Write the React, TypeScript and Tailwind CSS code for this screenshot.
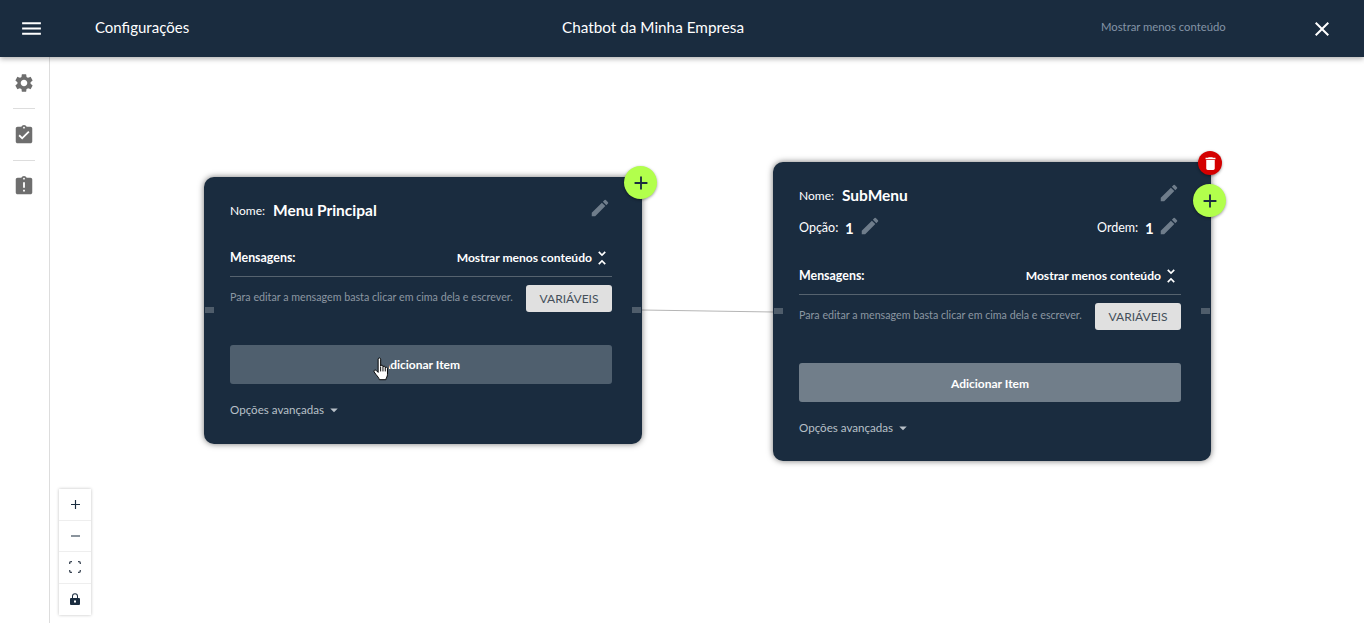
import { MdAdd, MdArrowDropDown, MdAssignmentLate, MdAssignmentTurnedIn, MdClose, MdDelete, MdEdit, MdMenu, MdSettings, MdUnfoldLess } from "react-icons/md";

const font = "font-['Lato','Noto_Sans',sans-serif]";

function HandCursor() {
  return (
    <svg className="absolute left-[143px] top-[12px]" width="18" height="25" viewBox="0 0 18 26">
      <path
        d="M5 2.2c0-1.6 2.6-1.6 2.6 0v7.3c0-1.3 2.4-1.3 2.4 0v1c0-1.2 2.4-1.2 2.4 0v1c0-1.1 2.3-1.1 2.3.2v6.3c0 2.6-1.4 3.4-1.7 5.6H6.3c-.5-2-2-3.4-3.4-5.2L.8 15.5c-.8-1.5 1-2.6 2.2-1.5L5 16V2.2z"
        fill="#fff"
        stroke="#000"
        strokeWidth="1"
      />
      <path d="M7.6 10v5M10 10.5v4.5M12.4 11.5V15" stroke="#000" strokeWidth="1" fill="none" />
    </svg>
  );
}

function NodeCard({ name, sub, hover, className }: { name: string; sub?: boolean; hover?: boolean; className: string }) {
  return (
    <div className={`absolute w-[438px] rounded-[10px] bg-[#1a2c3f] pl-[26px] pr-[30px] text-white shadow-[0_0_6px_rgba(0,0,0,0.55)] ${className}`}>
      <div className="mt-[22px] flex h-[24px] items-center justify-between">
        <div className="flex items-center">
          <span className="w-[43px] text-[12px]">Nome:</span>
          <span className="text-[15.5px] font-bold">{name}</span>
        </div>
        <MdEdit className="mb-[6px] mr-[1px] text-[#6f7d8b]" size={22} />
      </div>

      {sub && (
        <div className="mt-[8px] flex h-[24px] items-center justify-between">
          <div className="flex items-center">
            <span className="w-[46px] text-[12.5px]">Opção:</span>
            <span className="w-[14px] text-[15px] font-bold">1</span>
            <MdEdit className="mb-[4px] text-[#6f7d8b]" size={22} />
          </div>
          <div className="mr-[1px] flex items-center">
            <span className="w-[48px] text-[12.5px]">Ordem:</span>
            <span className="w-[13px] text-[15px] font-bold">1</span>
            <MdEdit className="mb-[4px] text-[#6f7d8b]" size={22} />
          </div>
        </div>
      )}

      <div className={`flex h-[20px] items-center justify-between ${sub ? "mt-[26px]" : "mt-[25px]"}`}>
        <span className="text-[12.4px] font-bold">Mensagens:</span>
        <div className="flex items-center">
          <span className="text-[12.1px] font-bold">Mostrar menos conteúdo</span>
          <MdUnfoldLess size={20} />
        </div>
      </div>
      <div className="mt-[8px] h-px bg-[#56636f]" />

      <div className="mt-[8px] flex h-[27px] items-center justify-between">
        <span className="mb-[2px] text-[10.7px] text-[#8c97a2]">Para editar a mensagem basta clicar em cima dela e escrever.</span>
        <button className="flex h-[27px] w-[86px] items-center justify-center rounded-[3px] bg-[#e0e0e0] text-[12px] text-[#444f5a]">
          VARIÁVEIS
        </button>
      </div>

      <div className="relative mt-[33px]">
        <button className={`flex h-[39px] w-full items-center justify-center rounded-[3px] text-[12px] font-bold ${hover ? "bg-[#4f5f6e]" : "bg-[#717e8a] pt-[2px]"}`}>
          Adicionar Item
        </button>
        {hover && (
          <>
            <span className="absolute left-[150px] top-[8px] h-[24px] w-[9px] bg-[#4f5f6e]" />
            <HandCursor />
          </>
        )}
      </div>

      <div className="mt-[16px] flex h-[20px] items-center text-[#b8c0c8]">
        <span className="text-[11.6px]">Opções avançadas</span>
        <MdArrowDropDown className="ml-[1px]" size={18} />
      </div>
      <div className={sub ? "h-[23px]" : "h-[24px]"} />

      {/* handles */}
      <span className={`absolute left-px h-[6px] w-[9px] bg-[#4f5d6b] ${sub ? "top-[146px]" : "top-[130px]"}`} />
      <span className={`absolute right-px h-[6px] w-[9px] bg-[#4f5d6b] ${sub ? "top-[146px]" : "top-[130px]"}`} />

      {sub && (
        <div className="absolute left-[425px] top-[-11px] flex h-[24px] w-[24px] items-center justify-center rounded-full bg-[#d40000] shadow-[0_1px_3px_rgba(0,0,0,0.4)]">
          <MdDelete size={17} />
        </div>
      )}
      <div className={`absolute flex h-[33px] w-[33px] items-center justify-center rounded-full bg-[#b2ff4c] text-[#1a2c3f] shadow-[0_1px_3px_rgba(0,0,0,0.4)] ${sub ? "left-[420px] top-[22px]" : "left-[420px] top-[-11px]"}`}>
        <MdAdd size={22} />
      </div>
    </div>
  );
}

export default function App() {
  const sideIcon = "text-[#6e6e6e]";
  const flowBtn = "flex h-[31.5px] w-full items-center justify-center border-b border-[#eeeeee] text-[#1a2c3f]";

  return (
    <div className={`${font} flex h-[623px] w-[1364px] flex-col overflow-hidden bg-white`}>
      <header className="relative z-10 flex h-[57px] shrink-0 items-center bg-[#1a2c3f] text-white shadow-[0_2px_5px_rgba(0,0,0,0.3)]">
        <MdMenu className="ml-[19px]" size={25} />
        <span className="mb-[2px] ml-[51px] w-[467px] text-[15px]">Configurações</span>
        <span className="mb-[2px] w-[539px] text-[15.3px]">Chatbot da Minha Empresa</span>
        <span className="mb-[2px] w-[209px] text-[11.3px] text-[#8494a6]">Mostrar menos conteúdo</span>
        <MdClose size={24} />
      </header>

      <div className="flex min-h-0 flex-1">
        <aside className="flex w-[50px] shrink-0 flex-col items-center border-r border-[#dddddd] pr-[1px] pt-[15px]">
          <MdSettings className={sideIcon} size={22} />
          <div className="mb-[15px] mt-[14px] h-px w-[22px] bg-[#dddddd]" />
          <MdAssignmentTurnedIn className={sideIcon} size={22} />
          <div className="mb-[14px] mt-[14px] h-px w-[22px] bg-[#dddddd]" />
          <MdAssignmentLate className={sideIcon} size={22} />
        </aside>

        <main className="relative flex-1">
          <svg className="absolute left-0 top-0" width="1314" height="566">
            <line x1="592" y1="253" x2="723" y2="255" stroke="#b5b5b5" strokeWidth="1" />
          </svg>
          <NodeCard name="Menu Principal" hover className="left-[154px] top-[120px]" />
          <NodeCard name="SubMenu" sub className="left-[723px] top-[105px]" />

          <div className="absolute left-[9px] top-[432px] w-[32px] bg-white shadow-[0_0_3px_rgba(0,0,0,0.25)]">
            <div className={flowBtn}>
              <svg width="9" height="9" viewBox="0 0 10 10"><path d="M5 0v10M0 5h10" stroke="currentColor" strokeWidth="1.3" /></svg>
            </div>
            <div className={flowBtn}>
              <svg width="9" height="2" viewBox="0 0 10 2"><path d="M0 1h10" stroke="#5d6a77" strokeWidth="1.6" /></svg>
            </div>
            <div className={flowBtn}>
              <svg width="12" height="12" viewBox="0 0 12 12" fill="none" stroke="#3a4553" strokeWidth="1.3">
                <path d="M.7 3V2Q.7.7 2 .7h1M9 .7h1q1.3 0 1.3 1.3v1M11.3 9v1q0 1.3-1.3 1.3H9M3 11.3H2Q.7 11.3.7 10V9" />
              </svg>
            </div>
            <div className="flex h-[31px] w-full items-center justify-center text-[#1a2c3f]">
              <svg width="10" height="12" viewBox="0 0 10 12">
                <path d="M1 5h1V3.2a3 3 0 0 1 6 0V5h1a1 1 0 0 1 1 1v5a1 1 0 0 1-1 1H1a1 1 0 0 1-1-1V6a1 1 0 0 1 1-1zm2 0h4V3.2a2 2 0 0 0-4 0V5z" fill="currentColor" fillRule="evenodd" />
                <rect x="4" y="7.5" width="2" height="2" fill="#fff" />
              </svg>
            </div>
          </div>
        </main>
      </div>
    </div>
  );
}
